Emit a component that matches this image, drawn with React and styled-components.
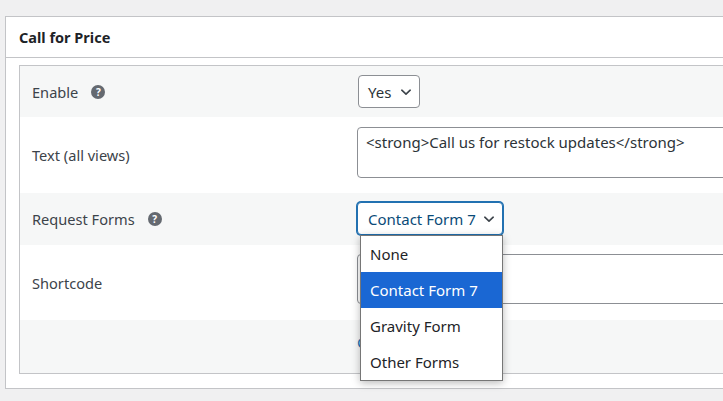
import React from "react";
import styled, { createGlobalStyle } from "styled-components";

const Global = createGlobalStyle`
  html, body { margin: 0; padding: 0; }
  body {
    background: #f0f0f1;
    font-family: "Noto Sans", "Open Sans", sans-serif;
    font-size: 14px;
    color: #3c434a;
    overflow: hidden;
    width: 723px;
    height: 401px;
  }
`;

const Page = styled.div`
  padding: 16px 0 0 5px;
  width: 760px;
`;

const Panel = styled.section`
  background: #fff;
  border: 1px solid #c3c4c7;
  box-sizing: border-box;
`;

const PanelHeader = styled.header`
  height: 40px;
  display: flex;
  align-items: center;
  padding: 0 13px;
  border-bottom: 1px solid #c3c4c7;
`;

const Title = styled.h2`
  margin: 0;
  font-size: 14.5px;
  font-weight: 700;
  color: #1d2327;
`;

const PanelBody = styled.div`
  padding: 7px 13px 14px 13px;
`;

const Table = styled.div`
  border: 1px solid #c3c4c7;
  position: relative;
`;

const Row = styled.div`
  display: grid;
  grid-template-columns: 338px 1fr;
  height: ${(p) => p.h}px;
  background: ${(p) => (p.alt ? "#f6f7f7" : "#fff")};
`;

const Label = styled.div`
  display: flex;
  align-items: center;
  gap: 13px;
  padding-left: 12px;
  color: #3c434a;
  font-size: 14.6px;
`;

const Field = styled.div`
  padding-top: ${(p) => p.pt}px;
  display: flex;
  align-items: flex-start;
`;

const Help = styled.span`
  display: inline-flex;
  align-items: center;
  justify-content: center;
  width: 14px;
  height: 14px;
  border-radius: 50%;
  background: #646970;
  color: #fff;
  font-size: 10px;
  font-weight: 700;
  line-height: 1;
`;

const Select = styled.div`
  box-sizing: border-box;
  height: 33px;
  display: inline-flex;
  align-items: center;
  gap: ${(p) => (p.focus ? 7 : 9)}px;
  padding: 0 7px 0 ${(p) => (p.focus ? 10 : 9)}px;
  margin-left: ${(p) => (p.focus ? -1 : 0)}px;
  border: 1px solid ${(p) => (p.focus ? "#2271b1" : "#8c8f94")};
  box-shadow: ${(p) => (p.focus ? "0 0 0 1px #2271b1" : "none")};
  border-radius: 4px;
  background: #fff;
  color: ${(p) => (p.focus ? "#0a4b78" : "#2c3338")};
  font-size: 15px;
  position: relative;
`;

const TextArea = styled.div`
  box-sizing: border-box;
  width: 420px;
  height: ${(p) => p.h}px;
  margin-left: -1px;
  border: 1px solid #8c8f94;
  border-radius: 4px;
  background: #fff;
  padding: 4px 8px;
  color: #2c3338;
  font-size: 15px;
  line-height: 21px;
`;

const Link = styled.a`
  color: #2271b1;
  text-decoration: none;
  font-size: 15px;
  margin-left: -1px;
`;

const Menu = styled.ul`
  position: absolute;
  left: 340px;
  top: 169px;
  width: 143px;
  box-sizing: border-box;
  margin: 0;
  padding: 0;
  list-style: none;
  background: #fff;
  border: 1px solid #767676;
  box-shadow: 0 2px 8px rgba(0, 0, 0, 0.28);
  z-index: 2;
`;

const Option = styled.li`
  height: 36px;
  display: flex;
  align-items: center;
  padding-left: 9px;
  font-size: 15px;
  background: ${(p) => (p.active ? "#1a67d3" : "#fff")};
  color: ${(p) => (p.active ? "#fff" : "#1d2327")};
`;

const Chevron = () => (
  <svg width="12" height="12" viewBox="0 0 12 12" aria-hidden="true">
    <path d="M1.8 4.2 L6 8.2 L10.2 4.2" fill="none" stroke="#3c434a" strokeWidth="1.6" strokeLinecap="round" strokeLinejoin="round" />
  </svg>
);

export default function App() {
  return (
    <>
      <Global />
      <Page>
        <Panel>
          <PanelHeader>
            <Title>Call for Price</Title>
          </PanelHeader>
          <PanelBody>
            <Table>
              <Row h={51} alt>
                <Label>
                  Enable <Help>?</Help>
                </Label>
                <Field pt={9}>
                  <Select>
                    Yes <Chevron />
                  </Select>
                </Field>
              </Row>
              <Row h={76}>
                <Label>Text (all views)</Label>
                <Field pt={10}>
                  <TextArea h={51}>&lt;strong&gt;Call us for restock updates&lt;/strong&gt;</TextArea>
                </Field>
              </Row>
              <Row h={52} alt>
                <Label>
                  Request Forms <Help>?</Help>
                </Label>
                <Field pt={9}>
                  <Select focus>
                    Contact Form 7 <Chevron />
                  </Select>
                </Field>
              </Row>
              <Row h={75}>
                <Label>Shortcode</Label>
                <Field pt={9}>
                  <TextArea h={50} />
                </Field>
              </Row>
              <Row h={53} alt>
                <Label />
                <Field pt={12}>
                  <Link href="#">Copy code</Link>
                </Field>
              </Row>
              <Menu>
                <Option>None</Option>
                <Option active>Contact Form 7</Option>
                <Option>Gravity Form</Option>
                <Option>Other Forms</Option>
              </Menu>
            </Table>
          </PanelBody>
        </Panel>
      </Page>
    </>
  );
}
